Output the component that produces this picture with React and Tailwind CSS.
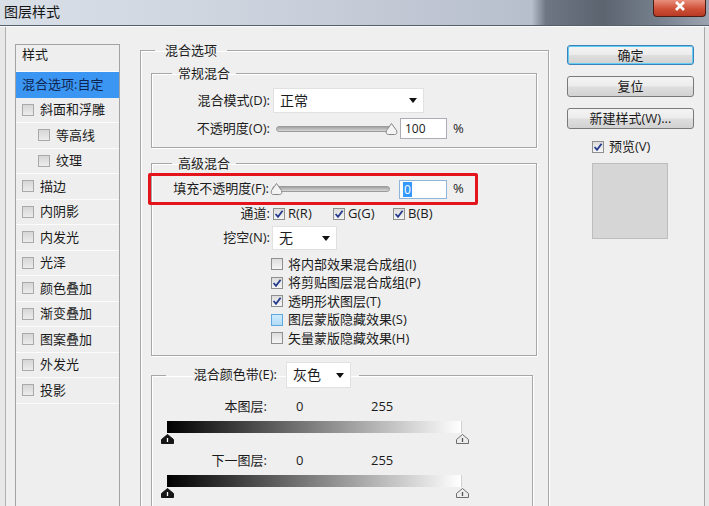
import React from 'react';

// Small square checkbox used throughout the dialog
const Check = ({ checked = false, hover = false, soft = false }) => {
  let skin = 'border-[#8e8f8f] bg-[linear-gradient(#dcdcdc,#f6f6f6)]';
  if (soft) skin = 'border-[#a9a9a9] bg-[linear-gradient(#d6d6d6,#ececec)]';
  if (hover) skin = 'border-[#5fa9de] bg-[linear-gradient(#cdeafb,#b3dcf5)]';
  return (
    <span className={`flex h-[12px] w-[12px] shrink-0 items-center justify-center border ${skin}`}>
      {checked && (
        <svg width="10" height="10" viewBox="0 0 10 10">
          <path d="M1.6 5 L4 7.8 L8.6 1.8" fill="none" stroke="#23398c" strokeWidth="1.8" />
        </svg>
      )}
    </span>
  );
};

const Caret = () => (
  <svg width="8" height="5" viewBox="0 0 8 5">
    <path d="M0 0 H8 L4 5 Z" fill="#111" />
  </svg>
);

const Select = ({ value, className = '' }) => (
  <div className={`flex items-center justify-between border border-[#e1e1e1] bg-white pl-[6px] pr-[6px] ${className}`}>
    <span className="text-[14px] leading-none">{value}</span>
    <Caret />
  </div>
);

// Opacity slider thumb, the rounded "house" marker
const Thumb = () => (
  <svg width="13" height="14" viewBox="0 0 13 14">
    <path d="M6.5 1.5 L11.6 8.6 Q12.6 12.5 9.5 12.5 H3.5 Q0.4 12.5 1.4 8.6 Z" fill="#f3f3f3" stroke="#858585" />
  </svg>
);

const Slider = ({ trackLeft, trackWidth, thumbLeft }) => (
  <div className="relative h-[14px] w-[124px]">
    <div
      className="absolute top-[4px] h-[6px] rounded-full border border-[#9c9c9c] bg-[linear-gradient(#a3a3a3,#d6d6d6)]"
      style={{ left: trackLeft, width: trackWidth }}
    />
    <div className="absolute top-0" style={{ left: thumbLeft }}>
      <Thumb />
    </div>
  </div>
);

// Little markers under the blend-if gradient bars
const BandStop = ({ dark }) => (
  <svg width="13" height="10" viewBox="0 0 13 10">
    <path d="M6.5 0.5 L12.5 5.5 V9.5 H0.5 V5.5 Z" fill={dark ? '#161616' : '#ededed'} stroke={dark ? '#161616' : '#6e6e6e'} />
    <path d="M6.5 4 V8" stroke={dark ? '#fff' : '#555'} strokeWidth="1.3" />
  </svg>
);

const Band = ({ label }) => (
  <>
    <div className="mt-[10px] flex h-[18px] items-center">
      <span className="w-[115px] text-right">{label}</span>
      <span className="ml-[29px] w-[75px]">0</span>
      <span>255</span>
    </div>
    <div className="ml-[15px] mt-[5px] h-[12px] w-[295px] border-r border-[#d0d0d0] bg-[linear-gradient(90deg,#000,#fff)]" />
    <div className="ml-[9px] mt-[1px] flex h-[10px] w-[308px] justify-between">
      <BandStop dark />
      <BandStop />
    </div>
  </>
);

const Group = ({ title, className = '', legendClass = 'ml-[20px] px-[6px]', children }) => (
  <fieldset className={`border border-[#a7a7a7] p-0 shadow-[inset_1px_1px_0_#fff,1px_1px_0_#fff] ${className}`}>
    <legend className={`h-[18px] leading-[18px] ${legendClass}`}>{title}</legend>
    {children}
  </fieldset>
);

const styleRows = [
  { label: '斜面和浮雕' },
  { label: '等高线', indent: true },
  { label: '纹理', indent: true },
  { label: '描边' },
  { label: '内阴影' },
  { label: '内发光' },
  { label: '光泽' },
  { label: '颜色叠加' },
  { label: '渐变叠加' },
  { label: '图案叠加' },
  { label: '外发光' },
  { label: '投影' },
];

const advancedOptions = [
  { label: '将内部效果混合成组(I)' },
  { label: '将剪贴图层混合成组(P)', checked: true },
  { label: '透明形状图层(T)', checked: true },
  { label: '图层蒙版隐藏效果(S)', hover: true },
  { label: '矢量蒙版隐藏效果(H)' },
];

const Button = ({ children, primary, className = '' }) => (
  <div
    className={`flex w-[127px] items-center justify-center rounded-[3px] border bg-[linear-gradient(#f4f4f4_0%,#ececec_48%,#dedede_52%,#d2d2d2_100%)] leading-none ${
      primary ? 'border-[#3b83b8] shadow-[inset_0_0_0_1px_#63cdf3]' : 'border-[#7a7a7a]'
    } ${className}`}
  >
    {children}
  </div>
);

export default function App() {
  return (
    <div className="h-[506px] w-[709px] overflow-hidden bg-[#efefef] font-['Open_Sans','Noto_Sans_CJK_SC',sans-serif] text-[13px] text-[#1b1b1b]">
      {/* title bar */}
      <div className="flex h-[26px] items-start justify-between border-b border-[#56606b] bg-[linear-gradient(90deg,#d9dfe7_0%,#cfd5df_30%,#c2c9d5_55%,#b7bfcc_75%,#6d7682_77%,#5b646f_85%,#737d89_92%,#9aa3af_100%)]">
        <span className="ml-[4px] mt-[3px] text-[14px] leading-[18px] text-[#151515]">图层样式</span>
        <div className="mr-[3px] flex h-[17px] w-[53px] items-center justify-center rounded-b-[4px] border border-t-0 border-[#4a1c14] bg-[linear-gradient(#e88f7c,#cf5037_55%,#b93a24)]">
          <svg width="12" height="12" viewBox="0 0 12 12" className="-mt-[5px]">
            <path d="M2 2 L10 10 M10 2 L2 10" stroke="#fff" strokeWidth="2.6" />
          </svg>
        </div>
      </div>

      <div className="flex h-[480px] border-t border-[#fafafa]">
        <div className="w-[6px] border-r border-[#b2b2b2] bg-[#e8e8e8]" />

        <div className="flex flex-1">
          {/* styles list */}
          <div className="ml-[9px] mt-[17px] h-[470px] w-[105px] border border-[#a3a3a3] bg-[#eeeeee]">
            <div className="h-[27px] border-b border-[#fafafa] pl-[6px] leading-[18px]">样式</div>
            <div className="flex h-[25.5px] items-center bg-[#3b96f3] pl-[6px] text-[#0e2450]">混合选项:自定</div>
            {styleRows.map((row) => (
              <div
                key={row.label}
                className={`flex h-[25.5px] items-center border-b border-[#fbfbfb] ${row.indent ? 'pl-[22px]' : 'pl-[6px]'}`}
              >
                <Check soft />
                <span className="ml-[6px]">{row.label}</span>
              </div>
            ))}
          </div>

          {/* blending options */}
          <Group title="混合选项" className="ml-[20px] mt-[14px] h-[520px] w-[409px]" legendClass="ml-[14px] px-[10px]">
            <div className="pl-[10px] pr-[11px] pt-[5px]">
              <Group title="常规混合" className="h-[84px] w-[386px]">
                <div className="mt-[6px] flex h-[25px] items-center">
                  <span className="w-[118px] text-right">混合模式(D):</span>
                  <Select value="正常" className="ml-[3px] h-[25px] w-[151px]" />
                </div>
                <div className="mt-[5px] flex h-[21px] items-center">
                  <span className="w-[118px] text-right">不透明度(O):</span>
                  <div className="ml-[5px]">
                    <Slider trackLeft={1} trackWidth={117} thumbLeft={110} />
                  </div>
                  <div className="ml-[1px] flex h-[21px] w-[47px] items-center border border-[#abadb3] bg-white pl-[4px] text-[12px]">100</div>
                  <span className="ml-[6px]">%</span>
                </div>
              </Group>

              <Group title="高级混合" className="mt-[6px] h-[202px] w-[386px]">
                <div className="-ml-[4px] mt-[1px] flex h-[32px] w-[330px] items-center rounded-[2px] border-[3px] border-[#e4141c]">
                  <span className="w-[118px] text-right">填充不透明度(F):</span>
                  <div className="ml-[1px]">
                    <Slider trackLeft={2} trackWidth={118} thumbLeft={0} />
                  </div>
                  <div className="ml-[5px] flex h-[19px] w-[48px] items-center border border-[#8fb4d8] bg-white pl-[3px] text-[12px]">
                    <span className="bg-[#3399ff] px-[1px] leading-[15px] text-white">0</span>
                  </div>
                  <span className="ml-[6px]">%</span>
                </div>

                <div className="flex h-[18px] items-center">
                  <span className="w-[118px] text-right">通道:</span>
                  <div className="ml-[3px] flex">
                    {['R(R)', 'G(G)', 'B(B)'].map((ch) => (
                      <div key={ch} className="flex w-[60px] items-center">
                        <Check checked />
                        <span className="ml-[3px]">{ch}</span>
                      </div>
                    ))}
                  </div>
                </div>

                <div className="mt-[3px] flex h-[24px] items-center">
                  <span className="w-[118px] text-right">挖空(N):</span>
                  <Select value="无" className="ml-[2px] h-[24px] w-[65px]" />
                </div>

                <div className="mt-[5px]">
                  {advancedOptions.map((opt) => (
                    <div key={opt.label} className="flex h-[18.5px] items-center pl-[119px]">
                      <Check checked={opt.checked} hover={opt.hover} />
                      <span className="ml-[5px]">{opt.label}</span>
                    </div>
                  ))}
                </div>
              </Group>

              <fieldset className="mt-[6px] h-[200px] w-[382px] border border-[#a7a7a7] p-0 shadow-[inset_1px_1px_0_#fff,1px_1px_0_#fff]">
                <legend className="ml-[14px] flex h-[26px] items-center pr-[8px]">
                  <span className="w-[111px] text-right">混合颜色带(E):</span>
                  <Select value="灰色" className="ml-[9px] h-[26px] w-[65px]" />
                </legend>
                <Band label="本图层:" />
                <div className="-mt-[2px]">
                  <Band label="下一图层:" />
                </div>
              </fieldset>
            </div>
          </Group>

          {/* buttons and preview */}
          <div className="ml-[18px] mt-[18px] flex flex-col">
            <Button primary className="h-[20px]">确定</Button>
            <Button className="mt-[11px] h-[21px]">复位</Button>
            <Button className="mt-[11px] h-[21px]">新建样式(W)...</Button>
            <div className="mt-[11px] flex h-[14px] items-center pl-[25px]">
              <Check checked />
              <span className="ml-[5px]">预览(V)</span>
            </div>
            <div className="ml-[25px] mt-[9px] h-[76px] w-[76px] border border-[#bdbdbd] bg-[#d6d6d6]" />
          </div>
        </div>

        <div className="w-[5px] border-l border-[#a8a8a8] bg-[#e8e8e8]" />
      </div>
    </div>
  );
}
